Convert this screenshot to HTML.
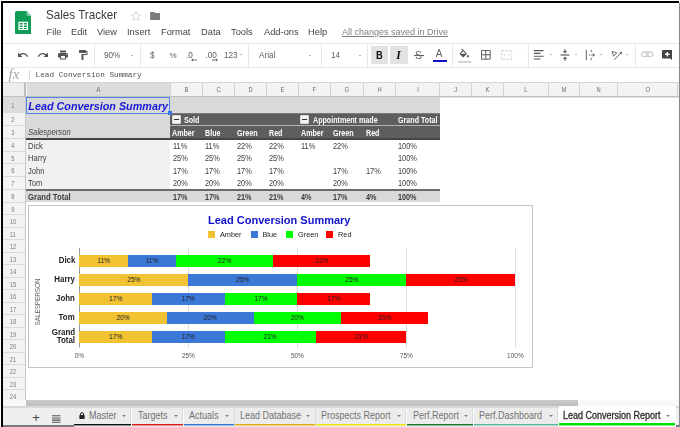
<!DOCTYPE html>
<html><head><meta charset="utf-8"><title>Sales Tracker</title>
<style>
html,body{margin:0;padding:0;}
body{width:680px;height:427px;overflow:hidden;background:#fff;position:relative;font-family:"Liberation Sans",sans-serif;color:#222;}
.a{position:absolute;white-space:nowrap;}
.bk{position:absolute;background:#000;}
.menu{position:absolute;top:26.5px;font-size:9.3px;color:#444;line-height:11px;white-space:nowrap;}
.tb{position:absolute;top:50.2px;font-size:8.2px;color:#606060;line-height:11px;white-space:nowrap;}
.sep{position:absolute;top:44px;height:23px;width:1px;background:#e8e8e8;}
.ch{position:absolute;top:83px;height:13px;background:#f3f3f3;border-right:1px solid #d2d2d2;box-sizing:border-box;font-size:7px;line-height:14.5px;text-align:center;color:#6a6a6a;}
.ch span,.rh span{display:inline-block;transform:scaleX(.82);}
.rh{position:absolute;left:3px;width:23px;background:#f3f3f3;border-bottom:1px solid #d0d0d0;border-right:1px solid #c8c8c8;box-sizing:border-box;font-size:7px;text-align:center;color:#7a7a7a;padding-right:2.4px;}
.c{position:absolute;font-size:8.3px;line-height:12.5px;white-space:nowrap;color:#3c3c3c;transform:scaleX(.89);transform-origin:0 50%;}
.w{color:#fff;font-weight:bold;transform:scaleX(.86);}
.b{font-weight:bold;transform:scaleX(.87);}
.tab{position:absolute;top:407px;height:20px;box-sizing:border-box;font-size:9.6px;line-height:17px;color:#666;white-space:nowrap;border-right:1px solid #d8d8d8;}
.tab i{position:absolute;left:0;right:0;bottom:1px;height:2px;}
.arr{position:absolute;width:0;height:0;border-left:1.6px solid transparent;border-right:1.6px solid transparent;border-top:1.8px solid #707070;}
.bl{position:absolute;font-size:6.6px;line-height:11.3px;color:#222;text-align:center;}
.yl{position:absolute;font-size:9.2px;font-weight:bold;color:#222;text-align:right;right:0;white-space:nowrap;transform:scaleX(.86);transform-origin:100% 50%;}
</style></head><body><div id="wrap" style="position:absolute;left:0;top:0;width:680px;height:427px;filter:blur(0.4px)">

<div class="a" style="left:46px;top:7.7px;font-size:12.2px;line-height:15px;color:#3a3a3a;transform:scaleX(.955);transform-origin:0 50%;">Sales Tracker</div>
<svg class="a" style="left:14.7px;top:10.6px" width="16.6" height="23.4" viewBox="0 0 16.6 23.4"><path d="M1.6 0h10l5 5v16.8a1.600 1.600 0 0 1-1.600 1.600H1.600a1.600 1.600 0 0 1-1.600-1.600V1.600a1.600 1.600 0 0 1 1.600-1.600z" fill="#0f9d58"/><path d="M11.600 0l5 5h-3.600a1.400 1.400 0 0 1-1.400-1.400z" fill="#87ceac"/><path d="M3.400 10.700h9.700v8.200H3.400z M4.700 11.900v1.500h3v-1.500z M8.900 11.900v1.500h3v-1.500z M4.700 14.500v1.500h3v-1.500z M8.900 14.500v1.500h3v-1.500z M4.700 17.100v0.800h3v-0.800z M8.900 17.100v0.800h3v-0.800z" fill="#fff" fill-rule="evenodd"/></svg>
<svg class="a" style="left:130px;top:9.5px" width="12" height="12" viewBox="0 0 24 24"><path d="M12 3l2.8 6.2 6.7.7-5 4.5 1.4 6.6L12 17.6 6.1 21l1.4-6.6-5-4.5 6.7-.7z" fill="none" stroke="#d0d0d0" stroke-width="1.7"/></svg>
<svg class="a" style="left:149.8px;top:11.8px" width="10.5" height="8.5" viewBox="0 0 12 10"><path d="M1 0h3.6l1.2 1.3H11a1 1 0 0 1 1 1V9a1 1 0 0 1-1 1H1a1 1 0 0 1-1-1V1a1 1 0 0 1 1-1z" fill="#7a7a7a"/></svg>
<div class="menu" style="left:46.5px">File</div>
<div class="menu" style="left:71px">Edit</div>
<div class="menu" style="left:97px">View</div>
<div class="menu" style="left:127px">Insert</div>
<div class="menu" style="left:161px">Format</div>
<div class="menu" style="left:201px">Data</div>
<div class="menu" style="left:231px">Tools</div>
<div class="menu" style="left:264px">Add-ons</div>
<div class="menu" style="left:308px">Help</div>
<div class="menu" style="left:342px;color:#808080;text-decoration:underline;font-size:9px;">All changes saved in Drive</div>
<div class="a" style="left:3px;top:43px;width:676px;height:1px;background:#e6e6e6"></div>
<div class="a" style="left:3px;top:66.6px;width:676px;height:1px;background:#e6e6e6"></div>
<div class="sep" style="left:94px"></div>
<div class="sep" style="left:140px"></div>
<div class="sep" style="left:248px"></div>
<div class="sep" style="left:321px"></div>
<div class="sep" style="left:367px"></div>
<div class="sep" style="left:452px"></div>
<div class="sep" style="left:528px"></div>
<div class="sep" style="left:635px"></div>
<div class="a" style="left:370.7px;top:46px;width:17.5px;height:18px;background:#e2e2e2;border-radius:1px"></div>
<div class="a" style="left:390.3px;top:46px;width:17.7px;height:18px;background:#e2e2e2;border-radius:1px"></div>
<svg class="a" style="left:17px;top:49px" width="12" height="12" viewBox="0 0 24 24"><path d="M12.5 8c-2.65 0-5.05.99-6.9 2.6L2 7v9h9l-3.62-3.62c1.39-1.16 3.16-1.88 5.12-1.88 3.54 0 6.55 2.31 7.6 5.5l2.37-.78C21.08 11.03 17.15 8 12.5 8z" fill="#555"/></svg>
<svg class="a" style="left:37px;top:49px" width="12" height="12" viewBox="0 0 24 24"><path d="M18.4 10.6C16.55 8.99 14.15 8 11.5 8c-4.65 0-8.58 3.03-9.96 7.22L3.9 16c1.05-3.19 4.05-5.5 7.6-5.5 1.95 0 3.73.72 5.12 1.88L13 16h9V7l-3.6 3.6z" fill="#555"/></svg>
<svg class="a" style="left:56.5px;top:48.5px" width="12" height="12" viewBox="0 0 24 24"><path d="M19 8H5c-1.66 0-3 1.34-3 3v6h4v4h12v-4h4v-6c0-1.66-1.34-3-3-3zm-3 11H8v-5h8v5zm3-7c-.55 0-1-.45-1-1s.45-1 1-1 1 .45 1 1-.45 1-1 1zm-1-9H6v4h12V3z" fill="#555"/></svg>
<svg class="a" style="left:77px;top:48.5px" width="12" height="12" viewBox="0 0 24 24"><path d="M18 4V3c0-.55-.45-1-1-1H5c-.55 0-1 .45-1 1v4c0 .55.45 1 1 1h12c.55 0 1-.45 1-1V6h1v4H9v11c0 .55.45 1 1 1h2c.55 0 1-.45 1-1v-9h8V4h-3z" fill="#555"/></svg>
<div class="tb" style="left:104px">90%</div>
<div class="arr" style="left:131.3px;top:54.6px"></div>
<div class="tb" style="left:150px">$</div>
<div class="tb" style="left:169.5px;font-size:8px">%</div>
<div class="tb" style="left:186px">.0</div>
<div class="tb" style="left:205.5px">.00</div>
<svg class="a" style="left:191px;top:58px" width="6" height="4" viewBox="0 0 6 4"><path d="M6 2H1.5" stroke="#606060" stroke-width="0.9"/><path d="M0 2l2-1.6v3.2z" fill="#606060"/></svg>
<svg class="a" style="left:212px;top:58px" width="6" height="4" viewBox="0 0 6 4"><path d="M0 2H4.5" stroke="#606060" stroke-width="0.9"/><path d="M6 2l-2-1.6v3.2z" fill="#606060"/></svg>
<div class="tb" style="left:224px">123</div>
<div class="arr" style="left:240px;top:54.2px;"></div>
<div class="tb" style="left:259px">Arial</div>
<div class="arr" style="left:309.3px;top:54.6px"></div>
<div class="tb" style="left:331px">14</div>
<div class="arr" style="left:358.6px;top:54.6px"></div>
<div class="tb" style="left:376.2px;top:49px;font-size:11px;line-height:12px;font-weight:bold;color:#111;transform:scaleX(.85);transform-origin:0 50%">B</div>
<div class="tb" style="left:396.3px;top:49px;font-size:11.5px;line-height:12px;font-weight:bold;font-style:italic;font-family:'Liberation Serif',serif;color:#111">I</div>
<div class="tb" style="left:415px;top:49.6px;font-size:10.5px;color:#606060">S</div>
<div class="tb" style="left:435.7px;top:48.3px;font-size:10px;color:#606060">A</div>
<div class="a" style="left:414.3px;top:54.8px;width:9.5px;height:1px;background:#606060"></div>
<div class="a" style="left:432.5px;top:59.5px;width:14px;height:2px;background:#1010cc"></div>
<svg class="a" style="left:457.3px;top:47.8px" width="15.5" height="15.5" viewBox="0 0 24 24"><path d="M16.56 8.94L7.62 0 6.21 1.41l2.38 2.38-5.15 5.15c-.59.59-.59 1.54 0 2.12l5.5 5.5c.29.29.68.44 1.06.44s.77-.15 1.06-.44l5.5-5.5c.59-.58.59-1.53 0-2.12zM5.21 10L10 5.21 14.79 10H5.21zM19 11.5s-2 2.170-2 3.500c0 1.100.9 2 2 2s2-.9 2-2c0-1.330-2-3.500-2-3.500z" fill="#555" transform="scale(0.8) translate(2,1)"/><rect x="2" y="20" width="20" height="3" fill="#d0d0d0"/></svg>
<svg class="a" style="left:481.3px;top:50.3px" width="9.6" height="9.6" viewBox="0 0 11 11"><path d="M0.5 0.5h10v10h-10z M5.5 0.5v10 M0.5 5.5h10" fill="none" stroke="#555" stroke-width="1.1"/></svg>
<svg class="a" style="left:500.8px;top:49.8px" width="11.5" height="10" viewBox="0 0 11.5 10"><path d="M0.6 0.6h10.3v8.800h-10.3z" fill="none" stroke="#d6d6d6" stroke-width="1.200" stroke-dasharray="2.400 1.300"/><path d="M2.500 5h2 M7 5h2" stroke="#d6d6d6" stroke-width="1.100"/></svg>
<div class="arr" style="left:519px;top:54.2px;border-top-color:#d4d4d4"></div>
<svg class="a" style="left:534px;top:49.5px" width="10" height="10" viewBox="0 0 10 10"><path d="M0 0.6h9.5 M0 3.4h6.5 M0 6.2h9.5 M0 9h6.5" stroke="#555" stroke-width="1.1"/></svg>
<div class="arr" style="left:549.5px;top:54.2px"></div>
<svg class="a" style="left:559.5px;top:48.500px" width="10" height="12" viewBox="0 0 10 12"><path d="M0.500 6h9" stroke="#555" stroke-width="1.1"/><path d="M5 0v2.200 M5 12v-2.200" stroke="#555" stroke-width="1"/><path d="M3 2l2 2.400 2-2.400z M3 10l2-2.400 2 2.400z" fill="#555"/></svg>
<div class="arr" style="left:574.500px;top:54.2px"></div>
<svg class="a" style="left:584.500px;top:48.800px" width="11" height="12" viewBox="0 0 11 12"><path d="M1.300 0.800v10.400" stroke="#606060" stroke-width="1"/><path d="M6.200 0.800v2.300 M6.200 8.900v2.300" stroke="#606060" stroke-width="0.900"/><path d="M3.800 6h4" stroke="#606060" stroke-width="0.900" stroke-dasharray="1.300 0.700"/><path d="M7.600 4.300l2.600 1.700-2.600 1.700z" fill="#606060"/></svg>
<div class="arr" style="left:599.500px;top:54.2px"></div>
<svg class="a" style="left:610.500px;top:50px" width="12" height="11" viewBox="0 0 12 11"><path d="M1 1.600l4.800 1.200-3.200 3.400z" fill="none" stroke="#606060" stroke-width="0.900"/><path d="M3.400 9.600l6.400-6.600" stroke="#606060" stroke-width="1"/><path d="M11 1.800l-0.500 2.800-2.300-2.200z" fill="#606060"/></svg>
<div class="arr" style="left:625.500px;top:54.2px"></div>
<svg class="a" style="left:641px;top:51.300px" width="12.500" height="7" viewBox="0 0 12.500 7"><rect x="0.700" y="1" width="6.600" height="4.600" rx="2.300" fill="none" stroke="#cfcfcf" stroke-width="1.300"/><rect x="5.200" y="1" width="6.600" height="4.600" rx="2.300" fill="none" stroke="#cfcfcf" stroke-width="1.300"/></svg>
<svg class="a" style="left:661.800px;top:50px" width="10.600" height="10.600" viewBox="0 0 12 12"><path d="M1 0h10a1 1 0 0 1 1 1v11l-2.500-2.500H1a1 1 0 0 1-1-1V1a1 1 0 0 1 1-1z" fill="#444"/><path d="M6 2.200v5.200 M3.400 4.800h5.200" stroke="#fff" stroke-width="1.500"/></svg>
<div class="a" style="left:8.5px;top:66.3px;font-family:'Liberation Serif',serif;font-style:italic;font-size:15px;line-height:16px;color:#a4a4a4;">fx</div>
<div class="a" style="left:29px;top:70px;width:1px;height:10px;background:#d8d8d8"></div>
<div class="a" style="left:35.6px;top:69.5px;font-family:'Liberation Mono',monospace;font-size:7.700px;line-height:11px;color:#505050;">Lead Conversion Summary</div>
<div class="a" style="left:3px;top:82px;width:676px;height:15px;background:#f3f3f3;border-top:1px solid #d4d4d4;border-bottom:1px solid #c0c0c0;box-sizing:border-box"></div>
<div class="a" style="left:3px;top:83px;width:23px;height:13px;background:#ededed;border-right:2px solid #bcbcbc;border-bottom:0;box-sizing:border-box"></div>
<div class="ch" style="left:27px;width:144px;background:#dcdcdc"><span>A</span></div>
<div class="ch" style="left:171px;width:32px;background:#f3f3f3"><span>B</span></div>
<div class="ch" style="left:203px;width:32px;background:#f3f3f3"><span>C</span></div>
<div class="ch" style="left:235px;width:32px;background:#f3f3f3"><span>D</span></div>
<div class="ch" style="left:267px;width:32px;background:#f3f3f3"><span>E</span></div>
<div class="ch" style="left:299px;width:32px;background:#f3f3f3"><span>F</span></div>
<div class="ch" style="left:331px;width:33px;background:#f3f3f3"><span>G</span></div>
<div class="ch" style="left:364px;width:32px;background:#f3f3f3"><span>H</span></div>
<div class="ch" style="left:396px;width:44px;background:#f3f3f3"><span>I</span></div>
<div class="ch" style="left:440px;width:32px;background:#f3f3f3"><span>J</span></div>
<div class="ch" style="left:472px;width:32px;background:#f3f3f3"><span>K</span></div>
<div class="ch" style="left:504px;width:45px;background:#f3f3f3"><span>L</span></div>
<div class="ch" style="left:549px;width:31px;background:#f3f3f3"><span>M</span></div>
<div class="ch" style="left:580px;width:38px;background:#f3f3f3"><span>N</span></div>
<div class="ch" style="left:618px;width:60px;background:#f3f3f3"><span>O</span></div>
<div class="a" style="left:440px;top:97px;width:239px;height:1px;background:#e2e2e2"></div>
<div class="rh" style="top:97.0px;height:16.0px;line-height:17.0px;background:#dcdcdc;border-bottom:0"><span>1</span></div>
<div class="a" style="left:3px;top:112px;width:22px;height:1px;background:#dadada"></div>
<div class="rh" style="top:113.0px;height:13.0px;line-height:14.0px;background:#f3f3f3;border-bottom:0"><span>2</span></div>
<div class="a" style="left:3px;top:125px;width:22px;height:1px;background:#dadada"></div>
<div class="rh" style="top:126.0px;height:13.0px;line-height:14.0px;background:#f3f3f3;border-bottom:0"><span>3</span></div>
<div class="a" style="left:3px;top:138px;width:22px;height:1px;background:#dadada"></div>
<div class="rh" style="top:139.0px;height:12.5px;line-height:13.5px;background:#f3f3f3;border-bottom:0"><span>4</span></div>
<div class="a" style="left:3px;top:151px;width:22px;height:1px;background:#dadada"></div>
<div class="rh" style="top:151.5px;height:12.5px;line-height:13.5px;background:#f3f3f3;border-bottom:0"><span>5</span></div>
<div class="a" style="left:3px;top:163px;width:22px;height:1px;background:#dadada"></div>
<div class="rh" style="top:164.0px;height:13.0px;line-height:14.0px;background:#f3f3f3;border-bottom:0"><span>6</span></div>
<div class="a" style="left:3px;top:176px;width:22px;height:1px;background:#dadada"></div>
<div class="rh" style="top:177.0px;height:12.5px;line-height:13.5px;background:#f3f3f3;border-bottom:0"><span>7</span></div>
<div class="a" style="left:3px;top:189px;width:22px;height:1px;background:#dadada"></div>
<div class="rh" style="top:189.5px;height:13.1px;line-height:14.1px;background:#f3f3f3;border-bottom:0"><span>8</span></div>
<div class="a" style="left:3px;top:202px;width:22px;height:1px;background:#dadada"></div>
<div class="rh" style="top:202.6px;height:12.5px;line-height:13.5px;background:#f3f3f3;border-bottom:0"><span>9</span></div>
<div class="a" style="left:3px;top:214px;width:22px;height:1px;background:#dadada"></div>
<div class="rh" style="top:215.1px;height:12.5px;line-height:13.5px;background:#f3f3f3;border-bottom:0"><span>10</span></div>
<div class="a" style="left:3px;top:227px;width:22px;height:1px;background:#dadada"></div>
<div class="rh" style="top:227.6px;height:12.5px;line-height:13.5px;background:#f3f3f3;border-bottom:0"><span>11</span></div>
<div class="a" style="left:3px;top:239px;width:22px;height:1px;background:#dadada"></div>
<div class="rh" style="top:240.1px;height:12.5px;line-height:13.5px;background:#f3f3f3;border-bottom:0"><span>12</span></div>
<div class="a" style="left:3px;top:252px;width:22px;height:1px;background:#dadada"></div>
<div class="rh" style="top:252.6px;height:12.5px;line-height:13.5px;background:#f3f3f3;border-bottom:0"><span>13</span></div>
<div class="a" style="left:3px;top:264px;width:22px;height:1px;background:#dadada"></div>
<div class="rh" style="top:265.1px;height:12.5px;line-height:13.5px;background:#f3f3f3;border-bottom:0"><span>14</span></div>
<div class="a" style="left:3px;top:277px;width:22px;height:1px;background:#dadada"></div>
<div class="rh" style="top:277.6px;height:12.5px;line-height:13.5px;background:#f3f3f3;border-bottom:0"><span>15</span></div>
<div class="a" style="left:3px;top:289px;width:22px;height:1px;background:#dadada"></div>
<div class="rh" style="top:290.1px;height:12.5px;line-height:13.5px;background:#f3f3f3;border-bottom:0"><span>16</span></div>
<div class="a" style="left:3px;top:302px;width:22px;height:1px;background:#dadada"></div>
<div class="rh" style="top:302.6px;height:12.5px;line-height:13.5px;background:#f3f3f3;border-bottom:0"><span>17</span></div>
<div class="a" style="left:3px;top:314px;width:22px;height:1px;background:#dadada"></div>
<div class="rh" style="top:315.1px;height:12.5px;line-height:13.5px;background:#f3f3f3;border-bottom:0"><span>18</span></div>
<div class="a" style="left:3px;top:327px;width:22px;height:1px;background:#dadada"></div>
<div class="rh" style="top:327.6px;height:12.5px;line-height:13.5px;background:#f3f3f3;border-bottom:0"><span>19</span></div>
<div class="a" style="left:3px;top:339px;width:22px;height:1px;background:#dadada"></div>
<div class="rh" style="top:340.1px;height:12.5px;line-height:13.5px;background:#f3f3f3;border-bottom:0"><span>20</span></div>
<div class="a" style="left:3px;top:352px;width:22px;height:1px;background:#dadada"></div>
<div class="rh" style="top:352.6px;height:12.5px;line-height:13.5px;background:#f3f3f3;border-bottom:0"><span>21</span></div>
<div class="a" style="left:3px;top:364px;width:22px;height:1px;background:#dadada"></div>
<div class="rh" style="top:365.1px;height:12.5px;line-height:13.5px;background:#f3f3f3;border-bottom:0"><span>22</span></div>
<div class="a" style="left:3px;top:377px;width:22px;height:1px;background:#dadada"></div>
<div class="rh" style="top:377.6px;height:12.5px;line-height:13.5px;background:#f3f3f3;border-bottom:0"><span>23</span></div>
<div class="a" style="left:3px;top:389px;width:22px;height:1px;background:#dadada"></div>
<div class="rh" style="top:390.1px;height:12.5px;line-height:13.5px;background:#f3f3f3;border-bottom:0"><span>24</span></div>
<div class="a" style="left:3px;top:402px;width:22px;height:1px;background:#dadada"></div>
<div class="a" style="left:26px;top:97px;width:414px;height:41.500px;background:#d9d9d9"></div>
<div class="a" style="left:170px;top:113px;width:270px;height:1px;background:#7c7c7c"></div>
<div class="a" style="left:170px;top:114px;width:270px;height:24.5px;background:#5e5e5e"></div>
<div class="a" style="left:26px;top:138px;width:414px;height:1.500px;background:#444"></div>
<div class="a" style="left:170px;top:125px;width:270px;height:1px;background:#b4b4b4"></div>
<div class="a" style="left:26px;top:139.500px;width:414px;height:50px;background:#fff"></div>
<div class="a" style="left:26px;top:139.500px;width:144px;height:50px;background:#f1f1f1"></div>
<div class="a" style="left:26px;top:189px;width:414px;height:13.4px;background:#d9d9d9"></div>
<div class="a" style="left:26px;top:189px;width:414px;height:2px;background:#6c6c6c"></div>
<div class="a" style="left:26px;top:97px;width:144px;height:16.500px;box-sizing:border-box;border:1px solid #4a86e8;background:#d9d9d9"></div>
<div class="a" style="left:168px;top:111px;width:4px;height:3.5px;background:#3b78e7"></div>
<div class="a" style="left:28.3px;top:98.5px;font-size:10.800px;line-height:14px;font-weight:bold;font-style:italic;color:#1616dc;">Lead Conversion Summary</div>
<div class="a" style="left:172px;top:115px;width:9.2px;height:9.2px;background:#f4f4f4;border:1px solid #dadada;box-sizing:border-box;border-radius:1px"></div><div class="a" style="left:174.2px;top:119px;width:4.8px;height:1.3px;background:#333"></div>
<div class="a" style="left:300.2px;top:115px;width:9.2px;height:9.2px;background:#f4f4f4;border:1px solid #dadada;box-sizing:border-box;border-radius:1px"></div><div class="a" style="left:302.4px;top:119px;width:4.8px;height:1.3px;background:#333"></div>
<div class="c w" style="left:184.3px;top:113.500px">Sold</div>
<div class="c w" style="left:313px;top:113.500px">Appointment made</div>
<div class="c w" style="left:397.8px;top:113.500px">Grand Total</div>
<div class="c" style="left:28px;top:126.3px;font-style:italic;color:#444;transform:scaleX(.925)">Salesperson</div>
<div class="c w" style="left:171.89999999999998px;top:126.5px">Amber</div>
<div class="c w" style="left:204.7px;top:126.5px">Blue</div>
<div class="c w" style="left:236.6px;top:126.5px">Green</div>
<div class="c w" style="left:268.6px;top:126.5px">Red</div>
<div class="c w" style="left:301px;top:126.5px">Amber</div>
<div class="c w" style="left:333.1px;top:126.5px">Green</div>
<div class="c w" style="left:365.7px;top:126.5px">Red</div>
<div class="c" style="left:28px;top:139.9px;transform:scaleX(.91)">Dick</div>
<div class="c" style="left:172.7px;top:139.9px">11%</div>
<div class="c" style="left:204.7px;top:139.9px">11%</div>
<div class="c" style="left:236.6px;top:139.9px">22%</div>
<div class="c" style="left:268.6px;top:139.9px">22%</div>
<div class="c" style="left:301px;top:139.9px">11%</div>
<div class="c" style="left:333.1px;top:139.9px">22%</div>
<div class="c" style="left:397.8px;top:139.9px">100%</div>
<div class="c" style="left:28px;top:152.4px;transform:scaleX(.91)">Harry</div>
<div class="c" style="left:172.7px;top:152.4px">25%</div>
<div class="c" style="left:204.7px;top:152.4px">25%</div>
<div class="c" style="left:236.6px;top:152.4px">25%</div>
<div class="c" style="left:268.6px;top:152.4px">25%</div>
<div class="c" style="left:397.8px;top:152.4px">100%</div>
<div class="c" style="left:28px;top:164.9px;transform:scaleX(.91)">John</div>
<div class="c" style="left:172.7px;top:164.9px">17%</div>
<div class="c" style="left:204.7px;top:164.9px">17%</div>
<div class="c" style="left:236.6px;top:164.9px">17%</div>
<div class="c" style="left:268.6px;top:164.9px">17%</div>
<div class="c" style="left:333.1px;top:164.9px">17%</div>
<div class="c" style="left:365.7px;top:164.9px">17%</div>
<div class="c" style="left:397.8px;top:164.9px">100%</div>
<div class="c" style="left:28px;top:177.4px;transform:scaleX(.91)">Tom</div>
<div class="c" style="left:172.7px;top:177.4px">20%</div>
<div class="c" style="left:204.7px;top:177.4px">20%</div>
<div class="c" style="left:236.6px;top:177.4px">20%</div>
<div class="c" style="left:268.6px;top:177.4px">20%</div>
<div class="c" style="left:333.1px;top:177.4px">20%</div>
<div class="c" style="left:397.8px;top:177.4px">100%</div>
<div class="c b" style="left:28px;top:191.1px;transform:scaleX(.93)">Grand Total</div>
<div class="c b" style="left:172.7px;top:191.1px">17%</div>
<div class="c b" style="left:204.7px;top:191.1px">17%</div>
<div class="c b" style="left:236.6px;top:191.1px">21%</div>
<div class="c b" style="left:268.6px;top:191.1px">21%</div>
<div class="c b" style="left:301px;top:191.1px">4%</div>
<div class="c b" style="left:333.1px;top:191.1px">17%</div>
<div class="c b" style="left:365.7px;top:191.1px">4%</div>
<div class="c b" style="left:397.8px;top:191.1px">100%</div>
<div class="a" style="left:28px;top:205px;width:505px;height:163px;box-sizing:border-box;border:1px solid #c4c4c4;background:#fff"></div>
<div class="a" style="left:28px;top:212.5px;width:502.5px;text-align:center;font-size:11px;line-height:15px;font-weight:bold;color:#1111cc;">Lead Conversion Summary</div>
<div class="a" style="left:208.2px;top:231.2px;width:7px;height:7px;background:#f1c232"></div>
<div class="a" style="left:220.0px;top:229.7px;font-size:7.3px;line-height:10px;color:#222">Amber</div>
<div class="a" style="left:250.7px;top:231.2px;width:7px;height:7px;background:#3c78d8"></div>
<div class="a" style="left:262.5px;top:229.7px;font-size:7.3px;line-height:10px;color:#222">Blue</div>
<div class="a" style="left:286.3px;top:231.2px;width:7px;height:7px;background:#00ff00"></div>
<div class="a" style="left:298.1px;top:229.7px;font-size:7.3px;line-height:10px;color:#222">Green</div>
<div class="a" style="left:326.3px;top:231.2px;width:7px;height:7px;background:#ff0000"></div>
<div class="a" style="left:338.1px;top:229.7px;font-size:7.3px;line-height:10px;color:#222">Red</div>
<div class="a" style="left:78.9px;top:248px;width:1px;height:100px;background:#dedede"></div>
<div class="a" style="left:187.9px;top:248px;width:1px;height:100px;background:#dedede"></div>
<div class="a" style="left:296.9px;top:248px;width:1px;height:100px;background:#dedede"></div>
<div class="a" style="left:405.9px;top:248px;width:1px;height:100px;background:#dedede"></div>
<div class="a" style="left:514.9px;top:248px;width:1px;height:100px;background:#dedede"></div>
<div class="a" style="left:78.9px;top:248px;width:1px;height:99px;background:#9a9a9a"></div>
<div class="bl" style="left:79.40px;top:254.50px;width:48.44px;height:12px;background:#f1c232">11%</div>
<div class="bl" style="left:127.84px;top:254.50px;width:48.44px;height:12px;background:#3c78d8">11%</div>
<div class="bl" style="left:176.29px;top:254.50px;width:96.89px;height:12px;background:#00ff00">22%</div>
<div class="bl" style="left:273.18px;top:254.50px;width:96.89px;height:12px;background:#ff0000">22%</div>
<div class="a" style="left:30px;width:45px;top:254.50px;height:12px"><div class="yl" style="line-height:10.4px;top:0;position:absolute">Dick</div></div>
<div class="bl" style="left:79.40px;top:273.50px;width:109.00px;height:12px;background:#f1c232">25%</div>
<div class="bl" style="left:188.40px;top:273.50px;width:109.00px;height:12px;background:#3c78d8">25%</div>
<div class="bl" style="left:297.40px;top:273.50px;width:109.00px;height:12px;background:#00ff00">25%</div>
<div class="bl" style="left:406.40px;top:273.50px;width:109.00px;height:12px;background:#ff0000">25%</div>
<div class="a" style="left:30px;width:45px;top:273.50px;height:12px"><div class="yl" style="line-height:10.4px;top:0;position:absolute">Harry</div></div>
<div class="bl" style="left:79.40px;top:292.50px;width:72.67px;height:12px;background:#f1c232">17%</div>
<div class="bl" style="left:152.07px;top:292.50px;width:72.67px;height:12px;background:#3c78d8">17%</div>
<div class="bl" style="left:224.73px;top:292.50px;width:72.67px;height:12px;background:#00ff00">17%</div>
<div class="bl" style="left:297.40px;top:292.50px;width:72.67px;height:12px;background:#ff0000">17%</div>
<div class="a" style="left:30px;width:45px;top:292.50px;height:12px"><div class="yl" style="line-height:10.4px;top:0;position:absolute">John</div></div>
<div class="bl" style="left:79.40px;top:311.50px;width:87.20px;height:12px;background:#f1c232">20%</div>
<div class="bl" style="left:166.60px;top:311.50px;width:87.20px;height:12px;background:#3c78d8">20%</div>
<div class="bl" style="left:253.80px;top:311.50px;width:87.20px;height:12px;background:#00ff00">20%</div>
<div class="bl" style="left:341.00px;top:311.50px;width:87.20px;height:12px;background:#ff0000">20%</div>
<div class="a" style="left:30px;width:45px;top:311.50px;height:12px"><div class="yl" style="line-height:10.4px;top:0;position:absolute">Tom</div></div>
<div class="bl" style="left:79.40px;top:330.50px;width:72.67px;height:12px;background:#f1c232">17%</div>
<div class="bl" style="left:152.07px;top:330.50px;width:72.67px;height:12px;background:#3c78d8">17%</div>
<div class="bl" style="left:224.73px;top:330.50px;width:90.83px;height:12px;background:#00ff00">21%</div>
<div class="bl" style="left:315.57px;top:330.50px;width:90.83px;height:12px;background:#ff0000">21%</div>
<div class="a" style="left:30px;width:45px;top:326.50px;height:20px"><div class="yl" style="line-height:8.8px;top:1px;position:absolute">Grand<br>Total</div></div>
<div class="a" style="left:64.4px;width:30px;top:350.7px;text-align:center;font-size:6.5px;line-height:10px;color:#555">0%</div>
<div class="a" style="left:173.4px;width:30px;top:350.7px;text-align:center;font-size:6.5px;line-height:10px;color:#555">25%</div>
<div class="a" style="left:282.4px;width:30px;top:350.7px;text-align:center;font-size:6.5px;line-height:10px;color:#555">50%</div>
<div class="a" style="left:391.4px;width:30px;top:350.7px;text-align:center;font-size:6.5px;line-height:10px;color:#555">75%</div>
<div class="a" style="left:500.4px;width:30px;top:350.7px;text-align:center;font-size:6.5px;line-height:10px;color:#555">100%</div>
<div class="a" style="left:7.5px;top:298px;width:60px;text-align:center;font-size:6.5px;letter-spacing:-0.15px;line-height:8px;color:#666;transform:rotate(-90deg);">SALESPERSON</div>
<div class="a" style="left:3px;top:400px;width:676px;height:6px;background:#f8f8f8;"></div>
<div class="a" style="left:26px;top:400px;width:552px;height:6px;background:linear-gradient(#cacaca,#bebebe)"></div>
<div class="a" style="left:3px;top:405.5px;width:676px;height:22px;background:#efefef;border-top:2px solid #d9d9d9;box-sizing:border-box"></div>
<div class="a" style="left:3px;top:425px;width:677px;height:2px;background:#7a7a7a"></div>
<div class="a" style="left:32.2px;top:410px;font-size:13px;line-height:16px;color:#444">+</div>
<svg class="a" style="left:52px;top:414.5px" width="8.5" height="8" viewBox="0 0 9 8"><path d="M0 0.600h9 M0 2.900h9 M0 5.200h9 M0 7.500h9" stroke="#555" stroke-width="1.100"/></svg>
<div class="a" style="left:74px;width:57.5px;top:407.5px;height:19.5px;background:#ececec;"></div>
<div class="a" style="left:130.0px;width:1px;top:407.5px;height:18px;background:#dcdcdc;"></div>
<div class="a" style="left:131.0px;width:1px;top:407.5px;height:18px;background:#fafafa;"></div>
<div class="a" style="left:74px;width:56.5px;top:424px;height:1px;background:#111;"></div>
<div class="a" style="left:74px;width:56.5px;top:425px;height:1px;background:#111;opacity:.45"></div>
<div class="a" style="left:88.5px;top:408px;font-size:10px;line-height:15px;color:#727272;transform:scaleX(.9);transform-origin:0 50%">Master</div>
<div class="arr" style="left:121.5px;top:415.4px;border-top-color:#808080;border-left-width:2.2px;border-right-width:2.2px;border-top-width:2.2px"></div>
<div class="a" style="left:131.5px;width:52.0px;top:407.5px;height:19.5px;background:#ececec;"></div>
<div class="a" style="left:182.0px;width:1px;top:407.5px;height:18px;background:#dcdcdc;"></div>
<div class="a" style="left:183.0px;width:1px;top:407.5px;height:18px;background:#fafafa;"></div>
<div class="a" style="left:131.5px;width:51.0px;top:424px;height:1px;background:#e01b1b;"></div>
<div class="a" style="left:131.5px;width:51.0px;top:425px;height:1px;background:#e01b1b;opacity:.45"></div>
<div class="a" style="left:137.7px;top:408px;font-size:10px;line-height:15px;color:#727272;transform:scaleX(.9);transform-origin:0 50%">Targets</div>
<div class="arr" style="left:173.5px;top:415.4px;border-top-color:#808080;border-left-width:2.2px;border-right-width:2.2px;border-top-width:2.2px"></div>
<div class="a" style="left:183.5px;width:51.5px;top:407.5px;height:19.5px;background:#ececec;"></div>
<div class="a" style="left:233.5px;width:1px;top:407.5px;height:18px;background:#dcdcdc;"></div>
<div class="a" style="left:234.5px;width:1px;top:407.5px;height:18px;background:#fafafa;"></div>
<div class="a" style="left:183.5px;width:50.5px;top:424px;height:1px;background:#3c78d8;"></div>
<div class="a" style="left:183.5px;width:50.5px;top:425px;height:1px;background:#3c78d8;opacity:.45"></div>
<div class="a" style="left:188.7px;top:408px;font-size:10px;line-height:15px;color:#727272;transform:scaleX(.9);transform-origin:0 50%">Actuals</div>
<div class="arr" style="left:225px;top:415.4px;border-top-color:#808080;border-left-width:2.2px;border-right-width:2.2px;border-top-width:2.2px"></div>
<div class="a" style="left:235px;width:81px;top:407.5px;height:19.5px;background:#ececec;"></div>
<div class="a" style="left:314.5px;width:1px;top:407.5px;height:18px;background:#dcdcdc;"></div>
<div class="a" style="left:315.5px;width:1px;top:407.5px;height:18px;background:#fafafa;"></div>
<div class="a" style="left:235px;width:80px;top:424px;height:1px;background:#e6a817;"></div>
<div class="a" style="left:235px;width:80px;top:425px;height:1px;background:#e6a817;opacity:.45"></div>
<div class="a" style="left:240.2px;top:408px;font-size:10px;line-height:15px;color:#727272;transform:scaleX(.9);transform-origin:0 50%">Lead Database</div>
<div class="arr" style="left:306px;top:415.4px;border-top-color:#808080;border-left-width:2.2px;border-right-width:2.2px;border-top-width:2.2px"></div>
<div class="a" style="left:316px;width:90.5px;top:407.5px;height:19.5px;background:#ececec;"></div>
<div class="a" style="left:405.0px;width:1px;top:407.5px;height:18px;background:#dcdcdc;"></div>
<div class="a" style="left:406.0px;width:1px;top:407.5px;height:18px;background:#fafafa;"></div>
<div class="a" style="left:316px;width:89.5px;top:424px;height:1px;background:#f0e60a;"></div>
<div class="a" style="left:316px;width:89.5px;top:425px;height:1px;background:#f0e60a;opacity:.45"></div>
<div class="a" style="left:321.2px;top:408px;font-size:10px;line-height:15px;color:#727272;transform:scaleX(.9);transform-origin:0 50%">Prospects Report</div>
<div class="arr" style="left:396.5px;top:415.4px;border-top-color:#808080;border-left-width:2.2px;border-right-width:2.2px;border-top-width:2.2px"></div>
<div class="a" style="left:406.5px;width:67.0px;top:407.5px;height:19.5px;background:#ececec;"></div>
<div class="a" style="left:472.0px;width:1px;top:407.5px;height:18px;background:#dcdcdc;"></div>
<div class="a" style="left:473.0px;width:1px;top:407.5px;height:18px;background:#fafafa;"></div>
<div class="a" style="left:406.5px;width:66.0px;top:424px;height:1px;background:#1f7a2e;"></div>
<div class="a" style="left:406.5px;width:66.0px;top:425px;height:1px;background:#1f7a2e;opacity:.45"></div>
<div class="a" style="left:412.5px;top:408px;font-size:10px;line-height:15px;color:#727272;transform:scaleX(.9);transform-origin:0 50%">Perf.Report</div>
<div class="arr" style="left:463.5px;top:415.4px;border-top-color:#808080;border-left-width:2.2px;border-right-width:2.2px;border-top-width:2.2px"></div>
<div class="a" style="left:473.5px;width:85.0px;top:407.5px;height:19.5px;background:#ececec;"></div>
<div class="a" style="left:557.0px;width:1px;top:407.5px;height:18px;background:#dcdcdc;"></div>
<div class="a" style="left:558.0px;width:1px;top:407.5px;height:18px;background:#fafafa;"></div>
<div class="a" style="left:473.5px;width:84.0px;top:424px;height:1px;background:#5fb39a;"></div>
<div class="a" style="left:473.5px;width:84.0px;top:425px;height:1px;background:#5fb39a;opacity:.45"></div>
<div class="a" style="left:479.2px;top:408px;font-size:10px;line-height:15px;color:#727272;transform:scaleX(.9);transform-origin:0 50%">Perf.Dashboard</div>
<div class="arr" style="left:548.5px;top:415.4px;border-top-color:#808080;border-left-width:2.2px;border-right-width:2.2px;border-top-width:2.2px"></div>
<div class="a" style="left:558.5px;width:117.5px;top:406px;height:21px;background:#fff;"></div>
<div class="a" style="left:558.5px;width:116.5px;top:423px;height:1px;background:#00e000;"></div>
<div class="a" style="left:558.5px;width:116.5px;top:424px;height:1px;background:#00e000;"></div>
<div class="a" style="left:558.5px;width:116.5px;top:425px;height:1px;background:#00e000;opacity:.45"></div>
<div class="a" style="left:563.2px;top:407.6px;font-size:10px;line-height:15px;color:#222;-webkit-text-stroke:0.3px #333;transform:scaleX(.9);transform-origin:0 50%">Lead Conversion Report</div>
<div class="arr" style="left:666px;top:415.4px;border-top-color:#808080;border-left-width:2.2px;border-right-width:2.2px;border-top-width:2.2px"></div>
<svg class="a" style="left:79.3px;top:411.8px" width="6" height="7.5" viewBox="0 0 8 10"><path d="M2 4V2.800a2 2 0 0 1 4 0V4" fill="none" stroke="#222" stroke-width="1.300"/><rect x="0.500" y="4" width="7" height="5.500" rx="0.800" fill="#222"/></svg>
<div class="bk" style="left:1.3px;top:1.2px;width:678px;height:1.7px"></div>
<div class="bk" style="left:1.3px;top:1.2px;width:1.7px;height:426px"></div>
<div class="a" style="left:679px;top:3px;width:1px;height:424px;background:#888"></div>
</div></body></html>
